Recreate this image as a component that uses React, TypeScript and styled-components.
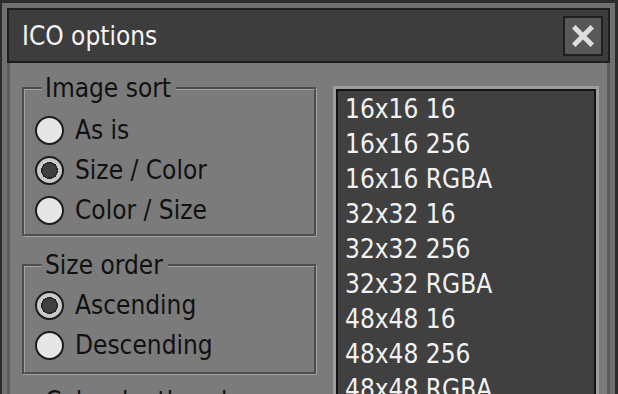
import React, { useState } from 'react';
import styled, { createGlobalStyle } from 'styled-components';

const GlobalStyle = createGlobalStyle`
  html, body {
    margin: 0;
    padding: 0;
    height: 100%;
    overflow: hidden;
    background: #2c2c2c;
  }
  body {
    font-family: "DejaVu Sans Condensed", "Liberation Sans", sans-serif;
    font-stretch: condensed;
    font-size: 26px;
  }
`;

const Window = styled.div`
  margin: 3px 3px 0 2px;
  height: calc(100vh - 3px);
  border: 5px solid #6f6f6f;
  border-bottom: none;
  box-sizing: border-box;
  display: flex;
  flex-direction: column;
  overflow: hidden;
`;

const TitleBar = styled.div`
  flex-shrink: 0;
  height: 55px;
  box-sizing: border-box;
  display: flex;
  align-items: center;
  justify-content: space-between;
  padding: 0 5px 0 13px;
  background: #3d3d3d;
  border: 2px solid #1e1e1e;
`;

const Title = styled.span`
  color: #f5f5f5;
  line-height: 1;
`;

const CloseButton = styled.button`
  width: 40px;
  height: 40px;
  padding: 0;
  display: flex;
  align-items: center;
  justify-content: center;
  background: #585858;
  border: 2px solid #1f1f1f;
  cursor: pointer;
`;

const Body = styled.div`
  flex: 1;
  min-height: 0;
  display: grid;
  grid-template-columns: 295px 260px;
  column-gap: 19px;
  align-items: start;
  padding: 10px 11px 0 12px;
  background: #7b7b7b;
  border-left: 3px solid #5c5c5c;
  border-right: 3px solid #5c5c5c;
`;

const Column = styled.div`
  display: flex;
  flex-direction: column;
`;

const Group = styled.fieldset<{ $gap?: number; $pad?: string }>`
  margin: ${(p) => p.$gap ?? 0}px 0 0;
  padding: ${(p) => p.$pad ?? '7px 10px 4px'};
  border: 3px groove #a2a2a2;
  min-width: 0;
`;

const Legend = styled.legend`
  padding: 0 5px 0 3px;
  margin-left: 7px;
  line-height: 30px;
  color: #111;
`;

const RadioRow = styled.label`
  height: 40px;
  display: flex;
  align-items: center;
  gap: 11px;
  color: #111;
  cursor: pointer;
`;

const RadioDot = styled.span<{ $on: boolean }>`
  width: 29px;
  height: 29px;
  box-sizing: border-box;
  border-radius: 50%;
  border: 2px solid #1c1c1c;
  flex-shrink: 0;
  background: ${(p) =>
    p.$on
      ? 'radial-gradient(circle, #404040 0 7px, #2a2a2a 7px 8.5px, #c9c9c9 8.5px)'
      : '#e6e6e6'};
`;

const ListBox = styled.div`
  margin-top: 16px;
  height: 330px;
  box-sizing: border-box;
  padding: 1px 7px 0;
  background: #404040;
  border: 2px solid #121212;
  box-shadow: 0 0 0 3px #9e9e9e;
  overflow: hidden;
`;

const ListItem = styled.div`
  line-height: 35px;
  color: #f2f2f2;
  white-space: nowrap;
`;

const CloseIcon = () => (
  <svg width="22" height="22" viewBox="0 0 22 22">
    <path d="M3.5 3.5 L18.5 18.5 M18.5 3.5 L3.5 18.5" stroke="#dedede" strokeWidth="5" strokeLinecap="square" />
  </svg>
);

const sizes = [
  '16x16 16',
  '16x16 256',
  '16x16 RGBA',
  '32x32 16',
  '32x32 256',
  '32x32 RGBA',
  '48x48 16',
  '48x48 256',
  '48x48 RGBA',
  '256x256 RGBA',
];

type RadioGroupProps = {
  options: string[];
  value: string;
  onChange: (v: string) => void;
};

const RadioGroup: React.FC<RadioGroupProps> = ({ options, value, onChange }) => (
  <>
    {options.map((o) => (
      <RadioRow key={o} onClick={() => onChange(o)}>
        <RadioDot $on={o === value} />
        {o}
      </RadioRow>
    ))}
  </>
);

export default function App() {
  const [sort, setSort] = useState('Size / Color');
  const [order, setOrder] = useState('Ascending');

  return (
    <>
      <GlobalStyle />
      <Window>
        <TitleBar>
          <Title>ICO options</Title>
          <CloseButton aria-label="Close">
            <CloseIcon />
          </CloseButton>
        </TitleBar>
        <Body>
          <Column>
            <Group>
              <Legend>Image sort</Legend>
              <RadioGroup options={['As is', 'Size / Color', 'Color / Size']} value={sort} onChange={setSort} />
            </Group>
            <Group $gap={13} $pad="5px 10px 7px">
              <Legend>Size order</Legend>
              <RadioGroup options={['Ascending', 'Descending']} value={order} onChange={setOrder} />
            </Group>
            <Group $gap={11}>
              <Legend>Color depth order</Legend>
              <RadioGroup options={['Ascending', 'Descending']} value="Ascending" onChange={() => {}} />
            </Group>
          </Column>
          <ListBox>
            {sizes.map((s) => (
              <ListItem key={s}>{s}</ListItem>
            ))}
          </ListBox>
        </Body>
      </Window>
    </>
  );
}
